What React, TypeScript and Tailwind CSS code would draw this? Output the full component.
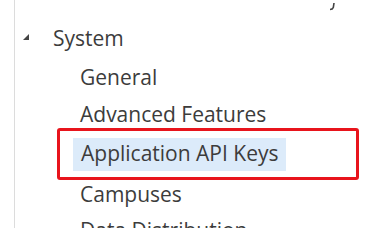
const rows = ["General", "Advanced Features"];

const Triangle = () => (
  <svg width="6" height="6" viewBox="0 0 6 6" className="mr-[24px] -mt-[4px]">
    <polygon points="6,0 6,6 0,6" fill="#444" />
  </svg>
);

export default function App() {
  return (
    <div className="w-[373px] h-[242px] bg-white overflow-hidden relative font-['Open_Sans',sans-serif] text-[#3c3c3c]">
      {/* tail of the item cut off above */}
      <svg width="6" height="8" viewBox="0 0 6 8" className="absolute left-[329px] top-[3px]">
        <path d="M5 0 L4.3 4.5 Q3.6 6.5 1 6.5" stroke="#444" strokeWidth="1.6" fill="none" />
      </svg>
      <div className="ml-[14px] border-l border-[#dcdcdc] h-[228px] pt-[20px] overflow-hidden">
        <div className="flex items-center h-[38px] pl-[8px] text-[21px]">
          <Triangle />
          System
        </div>
        {rows.map((r, i) => (
          <div
            key={r}
            className={`pl-[65px] flex items-center text-[21px] ${i === 0 ? "h-[39px]" : "h-[36px]"}`}
          >
            {r}
          </div>
        ))}
        <div className="-mt-[5px] ml-[42px] w-[302px] h-[52px] border-[3px] border-[#e8141c] rounded-[3px] flex items-center pl-[13px]">
          <span className="bg-[#dcebfa] px-[8px] h-[33px] flex items-center text-[21px]">
            Application API Keys
          </span>
        </div>
        <div className="h-[30px] pl-[65px] flex items-center text-[21px]">Campuses</div>
        <div className="h-[42px] pl-[65px] flex items-center text-[21px] whitespace-nowrap">
          Data Distribution
        </div>
      </div>
    </div>
  );
}
